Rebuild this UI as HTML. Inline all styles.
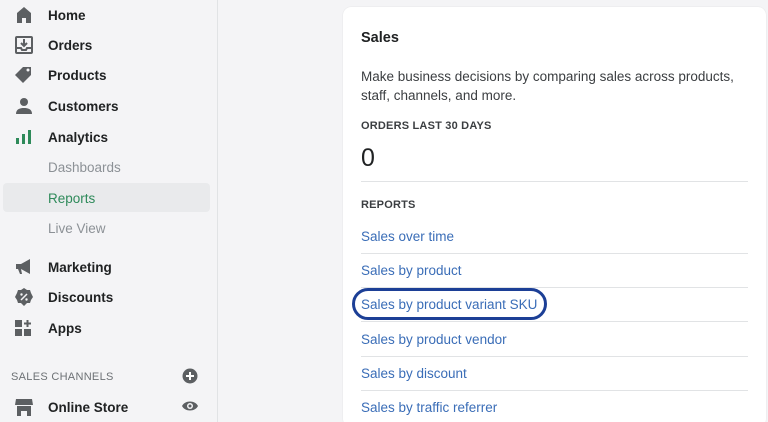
<!DOCTYPE html>
<html style="overflow:hidden;height:422px"><head><style>
*{margin:0;padding:0;box-sizing:border-box}
body{width:768px;height:422px;overflow:hidden;background:#f4f4f6;font-family:"Liberation Sans",sans-serif;position:relative}
.side{position:absolute;left:0;top:0;width:218px;height:422px;background:#f4f4f6;border-right:1px solid #e1e3e5}
.it{position:absolute;left:48px;font-size:13.5px;font-weight:bold;color:#202223;line-height:16px}
.sub{position:absolute;left:48px;font-size:13.5px;color:#8c9196;line-height:16px}
.ic{position:absolute;left:14px}
.card{position:absolute;left:343px;top:7px;width:423px;height:420px;background:#fff;border-radius:8px;box-shadow:0 0 1px rgba(0,0,0,.15)}
.t{position:absolute;left:361px;color:#202223}
.lk{position:absolute;left:361px;font-size:13.5px;color:#3a6db7;line-height:16px}
.dv{position:absolute;left:361px;width:387px;height:1px;background:#e1e3e5}
</style></head><body>
<div class="side"></div>
<svg class="ic" style="top:6px" width="20" height="18" viewBox="0 0 20 18"><path d="M10 1L3 7v10h5v-5h4v5h5V7z" fill="#5c5f62"/></svg>
<div class="it" style="top:8px">Home</div>
<svg class="ic" style="top:36px" width="20" height="18" viewBox="0 0 20 18"><rect x="2" y="1" width="16" height="16" rx="1" fill="none" stroke="#5c5f62" stroke-width="2"/><path d="M10 3v7M7 7l3 3 3-3M2 12h5l1 2h4l1-2h5" fill="none" stroke="#5c5f62" stroke-width="2"/></svg>
<div class="it" style="top:38px">Orders</div>
<svg class="ic" style="top:66px" width="20" height="18" viewBox="0 0 20 18"><path d="M9 1h8v8l-8 8-8-8z" fill="#5c5f62"/><circle cx="14" cy="4" r="1.5" fill="#f4f4f6"/></svg>
<div class="it" style="top:68px">Products</div>
<svg class="ic" style="top:97px" width="20" height="18" viewBox="0 0 20 18"><circle cx="10" cy="5" r="4" fill="#5c5f62"/><path d="M2 17c0-5 4-6 8-6s8 1 8 6z" fill="#5c5f62"/></svg>
<div class="it" style="top:99px">Customers</div>
<svg class="ic" style="top:128px" width="20" height="18" viewBox="0 0 20 18"><rect x="2" y="10" width="3" height="6" fill="#2e8a5a"/><rect x="8" y="6" width="3" height="10" fill="#2e8a5a"/><rect x="14" y="2" width="3" height="14" fill="#2e8a5a"/></svg>
<div class="it" style="top:130px">Analytics</div>
<div class="sub" style="top:160px">Dashboards</div>
<div style="position:absolute;left:3px;top:183px;width:207px;height:29px;background:#e9eaec;border-radius:4px"></div>
<div class="sub" style="top:191px;color:#2e8a5a">Reports</div>
<div class="sub" style="top:221px">Live View</div>
<svg class="ic" style="top:258px" width="20" height="18" viewBox="0 0 20 18"><path d="M2 6h5l9-5v15l-9-5H2z M4 11l2 5h2l-1-5z" fill="#5c5f62"/></svg>
<div class="it" style="top:260px">Marketing</div>
<svg class="ic" style="top:288px" width="20" height="18" viewBox="0 0 20 18"><path d="M10 0l3 2h3l1 3 2 4-2 3-1 3h-3l-3 3-3-3H4l-1-3-2-3 2-4 1-3h3z" fill="#5c5f62"/><path d="M7 12l6-6" stroke="#f4f4f6" stroke-width="1.5"/><circle cx="7.5" cy="6.5" r="1.2" fill="#f4f4f6"/><circle cx="12.5" cy="11.5" r="1.2" fill="#f4f4f6"/></svg>
<div class="it" style="top:290px">Discounts</div>
<svg class="ic" style="top:319px" width="20" height="18" viewBox="0 0 20 18"><rect x="1" y="1" width="7" height="7" fill="#5c5f62"/><rect x="1" y="10" width="7" height="7" fill="#5c5f62"/><rect x="10" y="10" width="7" height="7" fill="#5c5f62"/><path d="M13.5 1v7M10 4.5h7" stroke="#5c5f62" stroke-width="2"/></svg>
<div class="it" style="top:321px">Apps</div>
<div style="position:absolute;left:11px;top:371px;font-size:11px;color:#6d7175;letter-spacing:.3px">SALES CHANNELS</div>
<svg style="position:absolute;left:182px;top:368px" width="16" height="16" viewBox="0 0 16 16"><circle cx="8" cy="8" r="7.5" fill="#5c5f62"/><path d="M8 4v8M4 8h8" stroke="#fff" stroke-width="2"/></svg>
<svg class="ic" style="top:398px" width="20" height="18" viewBox="0 0 20 18"><path d="M2 1h16l1 6H1z" fill="#5c5f62"/><path d="M3 8h14v10h-4v-5H7v5H3z" fill="#5c5f62"/></svg>
<div class="it" style="top:400px">Online Store</div>
<svg style="position:absolute;left:181px;top:399px" width="18" height="14" viewBox="0 0 18 14"><path d="M1 7c3-6 13-6 16 0-3 6-13 6-16 0z" fill="#5c5f62"/><circle cx="9" cy="7" r="3" fill="#f4f4f6"/><circle cx="9" cy="7" r="1.5" fill="#5c5f62"/></svg>

<div class="card"></div>
<div class="t" style="top:30px;font-size:14.5px;font-weight:bold">Sales</div>
<div class="t" style="top:68px;font-size:13.5px;line-height:18.5px;color:#3b3e41;width:390px">Make business decisions by comparing sales across products, staff, channels, and more.</div>
<div class="t" style="top:120px;font-size:11px;font-weight:bold;letter-spacing:.2px;color:#3b3e41">ORDERS LAST 30 DAYS</div>
<div class="t" style="top:144px;font-size:25px">0</div>
<div class="dv" style="top:181px"></div>
<div class="t" style="top:199px;font-size:11px;font-weight:bold;letter-spacing:.2px;color:#3b3e41">REPORTS</div>
<div class="lk" style="top:229px">Sales over time</div>
<div class="dv" style="top:253px"></div>
<div class="lk" style="top:263px">Sales by product</div>
<div class="dv" style="top:287px"></div>
<div class="lk" style="top:297px">Sales by product variant SKU</div>
<div class="dv" style="top:321px"></div>
<div class="lk" style="top:332px">Sales by product vendor</div>
<div class="dv" style="top:356px"></div>
<div class="lk" style="top:366px">Sales by discount</div>
<div class="dv" style="top:390px"></div>
<div class="lk" style="top:400px">Sales by traffic referrer</div>
<div style="position:absolute;left:352px;top:288px;width:195px;height:32px;border:3px solid #1c3f96;border-radius:16px"></div>
</body></html>
